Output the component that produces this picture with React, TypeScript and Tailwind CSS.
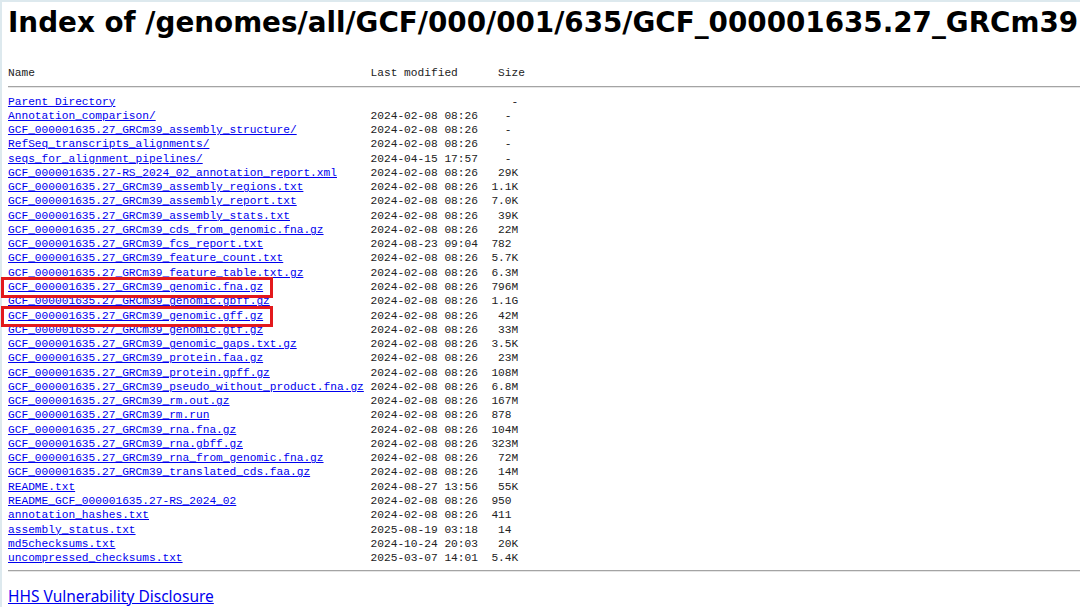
import React from "react";

type Row = { name: string; date: string; size: string };

const rows: Row[] = [
  { name: "Annotation_comparison/", date: "2024-02-08 08:26", size: "  - " },
  { name: "GCF_000001635.27_GRCm39_assembly_structure/", date: "2024-02-08 08:26", size: "  - " },
  { name: "RefSeq_transcripts_alignments/", date: "2024-02-08 08:26", size: "  - " },
  { name: "seqs_for_alignment_pipelines/", date: "2024-04-15 17:57", size: "  - " },
  { name: "GCF_000001635.27-RS_2024_02_annotation_report.xml", date: "2024-02-08 08:26", size: " 29K" },
  { name: "GCF_000001635.27_GRCm39_assembly_regions.txt", date: "2024-02-08 08:26", size: "1.1K" },
  { name: "GCF_000001635.27_GRCm39_assembly_report.txt", date: "2024-02-08 08:26", size: "7.0K" },
  { name: "GCF_000001635.27_GRCm39_assembly_stats.txt", date: "2024-02-08 08:26", size: " 39K" },
  { name: "GCF_000001635.27_GRCm39_cds_from_genomic.fna.gz", date: "2024-02-08 08:26", size: " 22M" },
  { name: "GCF_000001635.27_GRCm39_fcs_report.txt", date: "2024-08-23 09:04", size: "782 " },
  { name: "GCF_000001635.27_GRCm39_feature_count.txt", date: "2024-02-08 08:26", size: "5.7K" },
  { name: "GCF_000001635.27_GRCm39_feature_table.txt.gz", date: "2024-02-08 08:26", size: "6.3M" },
  { name: "GCF_000001635.27_GRCm39_genomic.fna.gz", date: "2024-02-08 08:26", size: "796M" },
  { name: "GCF_000001635.27_GRCm39_genomic.gbff.gz", date: "2024-02-08 08:26", size: "1.1G" },
  { name: "GCF_000001635.27_GRCm39_genomic.gff.gz", date: "2024-02-08 08:26", size: " 42M" },
  { name: "GCF_000001635.27_GRCm39_genomic.gtf.gz", date: "2024-02-08 08:26", size: " 33M" },
  { name: "GCF_000001635.27_GRCm39_genomic_gaps.txt.gz", date: "2024-02-08 08:26", size: "3.5K" },
  { name: "GCF_000001635.27_GRCm39_protein.faa.gz", date: "2024-02-08 08:26", size: " 23M" },
  { name: "GCF_000001635.27_GRCm39_protein.gpff.gz", date: "2024-02-08 08:26", size: "108M" },
  { name: "GCF_000001635.27_GRCm39_pseudo_without_product.fna.gz", date: "2024-02-08 08:26", size: "6.8M" },
  { name: "GCF_000001635.27_GRCm39_rm.out.gz", date: "2024-02-08 08:26", size: "167M" },
  { name: "GCF_000001635.27_GRCm39_rm.run", date: "2024-02-08 08:26", size: "878 " },
  { name: "GCF_000001635.27_GRCm39_rna.fna.gz", date: "2024-02-08 08:26", size: "104M" },
  { name: "GCF_000001635.27_GRCm39_rna.gbff.gz", date: "2024-02-08 08:26", size: "323M" },
  { name: "GCF_000001635.27_GRCm39_rna_from_genomic.fna.gz", date: "2024-02-08 08:26", size: " 72M" },
  { name: "GCF_000001635.27_GRCm39_translated_cds.faa.gz", date: "2024-02-08 08:26", size: " 14M" },
  { name: "README.txt", date: "2024-08-27 13:56", size: " 55K" },
  { name: "README_GCF_000001635.27-RS_2024_02", date: "2024-02-08 08:26", size: "950 " },
  { name: "annotation_hashes.txt", date: "2024-02-08 08:26", size: "411 " },
  { name: "assembly_status.txt", date: "2025-08-19 03:18", size: " 14 " },
  { name: "md5checksums.txt", date: "2024-10-24 20:03", size: " 20K" },
  { name: "uncompressed_checksums.txt", date: "2025-03-07 14:01", size: "5.4K" },
];

const pad = (n: number) => " ".repeat(Math.max(1, n));

const linkCls = "text-[#0000ee] underline decoration-1 underline-offset-[1px]";
const rowCls = "h-[14.28px] leading-[14.28px] whitespace-pre";

export default function App() {
  return (
    <div className="relative w-[1080px] h-[607px] overflow-hidden bg-white">
      <div className="h-full border-l-2 border-t-2 border-[#dde9ee] pl-[6px]">
        <h1
          className="h-[64px] pt-[5px] leading-[32px] text-[27.8px] font-bold text-black whitespace-nowrap"
          style={{ fontFamily: '"DejaVu Sans", "Noto Sans", sans-serif' }}
        >
          Index of /genomes/all/GCF/000/001/635/GCF_000001635.27_GRCm39
        </h1>
        <div
          className="text-[11.2px] text-[#222]"
          style={{ fontFamily: '"Liberation Mono", monospace' }}
        >
          <div className={rowCls}>
            {"Name" + pad(50) + "Last modified" + pad(6) + "Size"}
          </div>
          <div className="h-[14.28px] flex flex-col justify-center">
            <div className="h-px bg-[#a4a4a4]" />
            <div className="h-px bg-[#e6e6e6]" />
          </div>
          <div className={rowCls}>
            <a className={linkCls} href="#">
              Parent Directory
            </a>
            {pad(75 - 16) + "-"}
          </div>
          {rows.map((r) => (
            <div key={r.name} className={rowCls}>
              <a className={linkCls} href="#">
                {r.name}
              </a>
              {pad(54 - r.name.length) + r.date + "  " + r.size}
            </div>
          ))}
          <div className="mt-[5px] h-px bg-[#a4a4a4]" />
          <div className="h-px bg-[#e6e6e6]" />
        </div>
        <div
          className="mt-[14px] text-[15.5px] leading-[20px]"
          style={{ fontFamily: '"Noto Sans", "Open Sans", sans-serif' }}
        >
          <a className="text-[#0000ee] underline decoration-1" href="#">
            HHS Vulnerability Disclosure
          </a>
        </div>
      </div>
      <div className="absolute left-[1px] top-[277px] w-[272px] h-[21px] border-[3px] border-[#e3191c]" />
      <div className="absolute left-[1px] top-[306px] w-[272px] h-[21px] border-[3px] border-[#e3191c]" />
    </div>
  );
}
